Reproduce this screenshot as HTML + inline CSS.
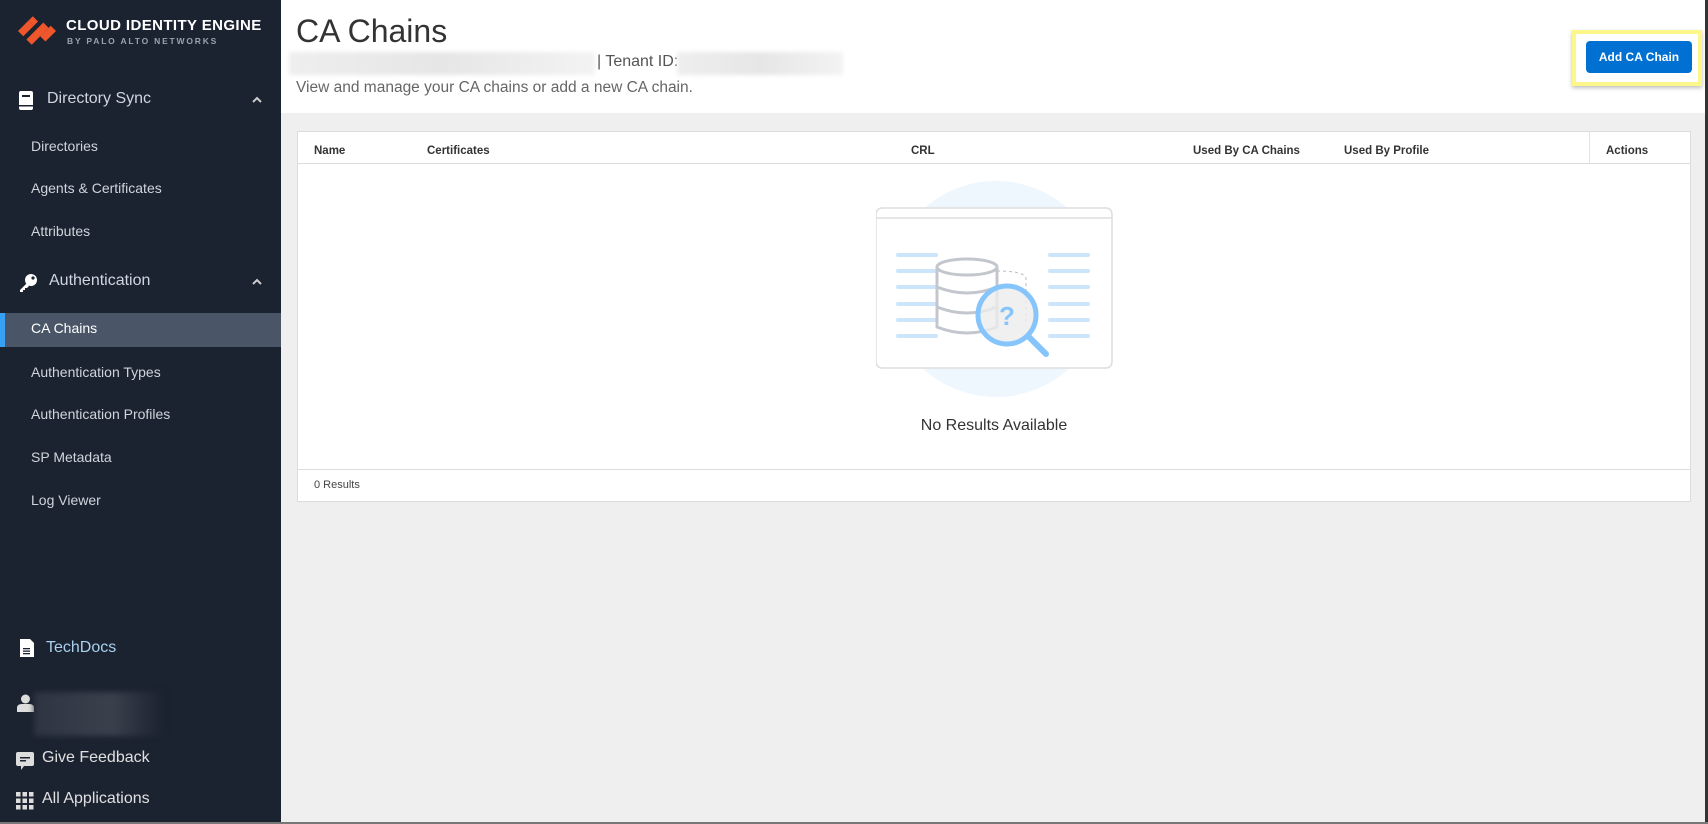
<!DOCTYPE html>
<html><head><meta charset="utf-8"><style>
*{margin:0;padding:0;box-sizing:border-box}
body{width:1708px;height:824px;overflow:hidden;font-family:"Liberation Sans",sans-serif;background:#efefef;position:relative}
.sb{position:absolute;left:0;top:0;width:281px;height:822px;background:#1b2230;color:#d6dbe2}
.sb .it{position:absolute;left:31px;font-size:14px;color:#d0d5dc}
.sb .hd{position:absolute;left:47px;font-size:16px;color:#cfd6df}
.main{position:absolute;left:281px;top:0;width:1424px;height:113px;background:#fff}
.blur{position:absolute;background:linear-gradient(90deg,#eeeeee,#e6e6e6 50%,#f3f3f3);filter:blur(2px)}
.tbl{position:absolute;left:297px;top:131px;width:1394px;height:371px;background:#fff;border:1px solid #dcdcdc}
.th{position:absolute;top:13px;font-size:11.5px;font-weight:bold;color:#333}
.chev{position:absolute;left:252px}
</style></head><body>
<div class="sb">
 <svg style="position:absolute;left:18px;top:16px" width="38" height="30" viewBox="0 0 36 28">
  <g fill="#f0562b"><polygon points="0,14 10,4 15,9 5,19"/><polygon points="8,22 24,6 29,11 13,27"/><polygon points="21,19 31,9 36,14 26,24"/><polygon points="10,4 14,0 19,5 15,9"/></g></svg>
 <div style="position:absolute;left:66px;top:17px;font-size:15px;font-weight:bold;color:#fff;letter-spacing:.4px">CLOUD IDENTITY ENGINE</div>
 <div style="position:absolute;left:67px;top:36px;font-size:8.5px;font-weight:bold;color:#9aa3ae;letter-spacing:1.8px">BY PALO ALTO NETWORKS</div>
 <svg style="position:absolute;left:18px;top:91px" width="16" height="19"><rect x="1" y="0" width="14" height="19" rx="2" fill="#fff"/><rect x="4" y="4" width="8" height="2" fill="#1b2230"/><rect x="1" y="14" width="14" height="1.5" fill="#1b2230"/></svg>
 <div class="hd" style="top:90px">Directory Sync</div>
 <svg class="chev" style="top:96px" width="10" height="7"><path d="M1 6L5 2L9 6" fill="none" stroke="#ccc" stroke-width="2"/></svg>
 <div class="it" style="top:138px">Directories</div>
 <div class="it" style="top:180px">Agents &amp; Certificates</div>
 <div class="it" style="top:223px">Attributes</div>
 <svg style="position:absolute;left:18px;top:273px" width="20" height="20" viewBox="0 0 20 20"><circle cx="13" cy="7" r="6" fill="#fff"/><circle cx="15" cy="5" r="1.6" fill="#1b2230"/><path d="M9 10 L2 17 L2 19 L5 19 L5 17 L7 17 L7 15 L9 15 L11 13Z" fill="#fff"/></svg>
 <div class="hd" style="top:272px;left:49px">Authentication</div>
 <svg class="chev" style="top:278px" width="10" height="7"><path d="M1 6L5 2L9 6" fill="none" stroke="#ccc" stroke-width="2"/></svg>
 <div style="position:absolute;left:0;top:313px;width:281px;height:34px;background:#4a5668;border-left:5px solid #37a2f5"></div>
 <div class="it" style="top:320px;color:#fff">CA Chains</div>
 <div class="it" style="top:364px">Authentication Types</div>
 <div class="it" style="top:406px">Authentication Profiles</div>
 <div class="it" style="top:449px">SP Metadata</div>
 <div class="it" style="top:492px">Log Viewer</div>
 <svg style="position:absolute;left:20px;top:639px" width="14" height="18"><path d="M0 0H10L14 4V18H0Z" fill="#fff"/><rect x="3" y="9" width="7" height="1.3" fill="#1b2230"/><rect x="3" y="11.5" width="7" height="1.3" fill="#1b2230"/><rect x="3" y="14" width="7" height="1.3" fill="#1b2230"/></svg>
 <div class="hd" style="top:639px;left:46px;color:#a9d0ee">TechDocs</div>
 <svg style="position:absolute;left:17px;top:694px" width="17" height="18"><circle cx="8.5" cy="5" r="4.5" fill="#ddd"/><path d="M0 18V14Q0 10 5 10H12Q17 10 17 14V18Z" fill="#ddd"/></svg>
 <div style="position:absolute;left:34px;top:692px;width:130px;height:44px;background:linear-gradient(90deg,#2e3441,#3a404c 60%,#1b2230);filter:blur(3px)"></div>
 <svg style="position:absolute;left:16px;top:752px" width="18" height="18"><path d="M2 0H16Q18 0 18 2V12Q18 14 16 14H8L5 18V14H2Q0 14 0 12V2Q0 0 2 0Z" fill="#ddd"/><rect x="4" y="5" width="10" height="1.5" fill="#1b2230"/><rect x="4" y="8" width="6" height="1.5" fill="#1b2230"/></svg>
 <div class="hd" style="top:749px;left:42px;color:#e0e0e0">Give Feedback</div>
 <svg style="position:absolute;left:16px;top:792px" width="18" height="18" fill="#ddd"><rect x="0" y="0" width="4.5" height="4.5"/><rect x="6.5" y="0" width="4.5" height="4.5"/><rect x="13" y="0" width="4.5" height="4.5"/><rect x="0" y="6.5" width="4.5" height="4.5"/><rect x="6.5" y="6.5" width="4.5" height="4.5"/><rect x="13" y="6.5" width="4.5" height="4.5"/><rect x="0" y="13" width="4.5" height="4.5"/><rect x="6.5" y="13" width="4.5" height="4.5"/><rect x="13" y="13" width="4.5" height="4.5"/></svg>
 <div class="hd" style="top:790px;left:42px;color:#e0e0e0">All Applications</div>
</div>
<div class="main">
 <div style="position:absolute;left:15px;top:13px;font-size:32px;color:#333">CA Chains</div>
 <div class="blur" style="left:8px;top:52px;width:306px;height:23px"></div>
 <div style="position:absolute;left:316px;top:53px;font-size:16px;color:#555">| Tenant ID:</div>
 <div class="blur" style="left:396px;top:52px;width:166px;height:23px"></div>
 <div style="position:absolute;left:15px;top:79px;font-size:15.5px;color:#666">View and manage your CA chains or add a new CA chain.</div>
 <div style="position:absolute;left:1291px;top:30px;width:130px;height:56px;border:4px solid #fbf78a;box-shadow:0 2px 4px rgba(0,0,0,.25)"></div>
 <div style="position:absolute;left:1305px;top:41px;width:106px;height:32px;background:#0070d2;border-radius:4px;color:#fff;font-size:12px;font-weight:bold;text-align:center;line-height:32px">Add CA Chain</div>
</div>
<div class="tbl">
 <div style="position:absolute;left:0;top:31px;width:100%;border-top:1px solid #dcdcdc"></div>
 <div style="position:absolute;left:1291px;top:0;height:31px;border-left:1px solid #e3e3e3"></div>
 <div class="th" style="left:16px">Name</div>
 <div class="th" style="left:129px">Certificates</div>
 <div class="th" style="left:613px">CRL</div>
 <div class="th" style="left:895px">Used By CA Chains</div>
 <div class="th" style="left:1046px">Used By Profile</div>
 <div class="th" style="left:1308px">Actions</div>
 <svg style="position:absolute;left:578px;top:43px" width="240" height="230" viewBox="0 0 240 230">
  <circle cx="120" cy="114" r="108" fill="#eef6fe"/>
  <rect x="0" y="33" width="236" height="160" rx="6" fill="#fff" stroke="#ddd" stroke-width="1.5"/>
  <line x1="0" y1="43" x2="236" y2="43" stroke="#ddd" stroke-width="1.5"/>
  <g stroke="#cde5fb" stroke-width="4" stroke-linecap="round">
   <line x1="22" y1="80" x2="60" y2="80"/><line x1="22" y1="96" x2="60" y2="96"/><line x1="22" y1="112" x2="60" y2="112"/><line x1="22" y1="129" x2="60" y2="129"/><line x1="22" y1="145" x2="60" y2="145"/><line x1="22" y1="161" x2="60" y2="161"/>
   <line x1="174" y1="80" x2="212" y2="80"/><line x1="174" y1="96" x2="212" y2="96"/><line x1="174" y1="112" x2="212" y2="112"/><line x1="174" y1="129" x2="212" y2="129"/><line x1="174" y1="145" x2="212" y2="145"/><line x1="174" y1="161" x2="212" y2="161"/>
  </g>
  <g fill="none" stroke="#c3c7cd" stroke-width="3">
   <ellipse cx="91" cy="92" rx="30" ry="8"/>
   <path d="M61 92V152Q91 164 121 152V92"/>
   <path d="M61 112Q91 124 121 112M61 132Q91 144 121 132"/>
  </g>
  <path d="M121 96Q150 96 150 104V150" fill="none" stroke="#c3c7cd" stroke-width="1.2" stroke-dasharray="3,3"/>
  <circle cx="131" cy="140" r="29" fill="#ececec" fill-opacity=".8" stroke="#86c5fb" stroke-width="5"/>
  <line x1="152" y1="161" x2="170" y2="179" stroke="#86c5fb" stroke-width="6" stroke-linecap="round"/>
  <text x="131" y="150" text-anchor="middle" font-size="26" font-weight="bold" fill="#86c5fb" font-family="Liberation Sans">?</text>
 </svg>
 <div style="position:absolute;left:0;top:285px;width:100%;text-align:center;font-size:16px;color:#333">No Results Available</div>
 <div style="position:absolute;left:0;top:337px;width:100%;border-top:1px solid #dcdcdc"></div>
 <div style="position:absolute;left:16px;top:347px;font-size:11px;color:#444">0 Results</div>
</div>
<div style="position:absolute;left:1705px;top:0;width:3px;height:824px;background:#333"></div>
<div style="position:absolute;left:0;top:822px;width:1708px;height:2px;background:#777"></div>
</body></html>
